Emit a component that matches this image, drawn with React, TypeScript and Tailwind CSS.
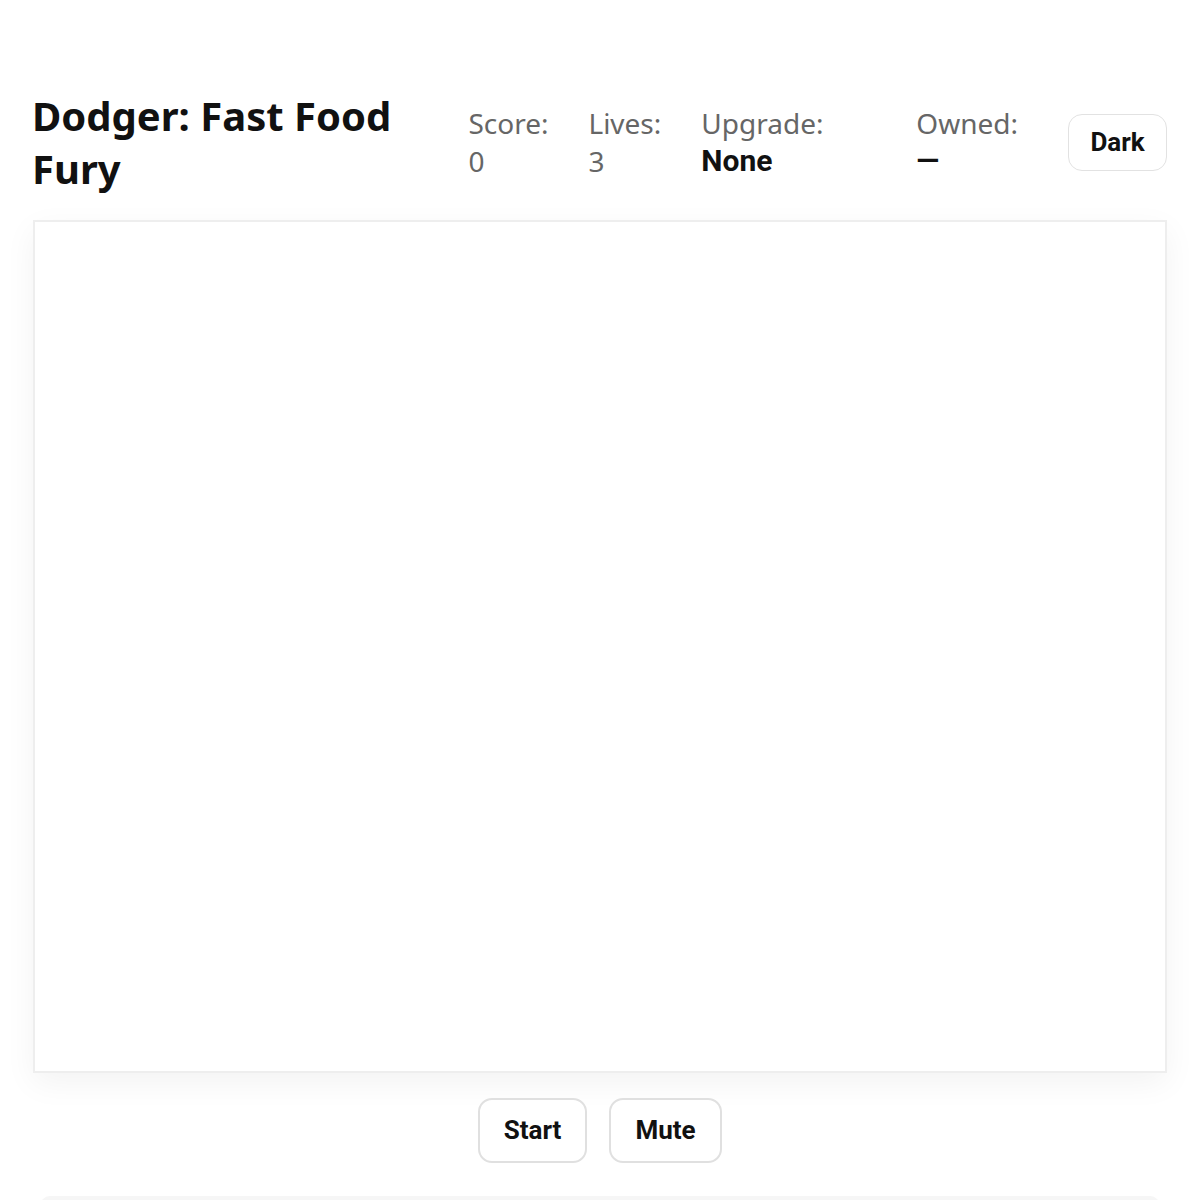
const Stat = ({ label, value, strong, className }: { label: string; value: string; strong?: boolean; className?: string }) => (
  <div className={"flex flex-col leading-[38px] " + (className ?? "")}>
    <span className="text-[28px] text-[#666]">{label}</span>
    {strong ? (
      <strong className="text-[30px] font-bold text-[#111] font-['Roboto',sans-serif]">{value}</strong>
    ) : (
      <span className="text-[28px] text-[#666]">{value}</span>
    )}
  </div>
);

const App = () => {
  return (
    <div className="min-h-[1200px] overflow-hidden bg-white px-[33px] pt-[89px] font-['Noto_Sans',sans-serif] text-[#111]">
      <header className="flex items-center justify-between">
        <h1 className="-ml-px w-[400px] text-[40px] font-bold leading-[53px]">Dodger: Fast Food Fury</h1>
        <div className="flex items-center">
          <div className="flex gap-[40px]">
            <Stat label="Score:" value="0" />
            <Stat label="Lives:" value="3" />
            <Stat label="Upgrade:" value="None" strong className="w-[175px]" />
            <Stat label="Owned:" value="—" strong />
          </div>
          <button className="ml-[50px] h-[57px] w-[99px] rounded-[14px] border border-[#e2e2e2] bg-white font-['Roboto',sans-serif] text-[26px] font-bold">
            Dark
          </button>
        </div>
      </header>

      <div className="mt-[25px] h-[853px] border-2 border-[#eeeeee] bg-white shadow-[0_10px_30px_rgba(0,0,0,0.05)]" />

      <div className="mt-[25px] flex justify-center gap-[22px]">
        <button className="h-[65px] w-[109px] rounded-[14px] border-2 border-[#e0e0e0] bg-white font-['Roboto',sans-serif] text-[26px] font-bold">
          Start
        </button>
        <button className="h-[65px] w-[113px] rounded-[14px] border-2 border-[#e0e0e0] bg-white font-['Roboto',sans-serif] text-[26px] font-bold">
          Mute
        </button>
      </div>

      <div className="mx-[7px] mt-[33px] h-[120px] rounded-t-[10px] bg-[#f6f6f6]" />
    </div>
  );
};

export default App;
